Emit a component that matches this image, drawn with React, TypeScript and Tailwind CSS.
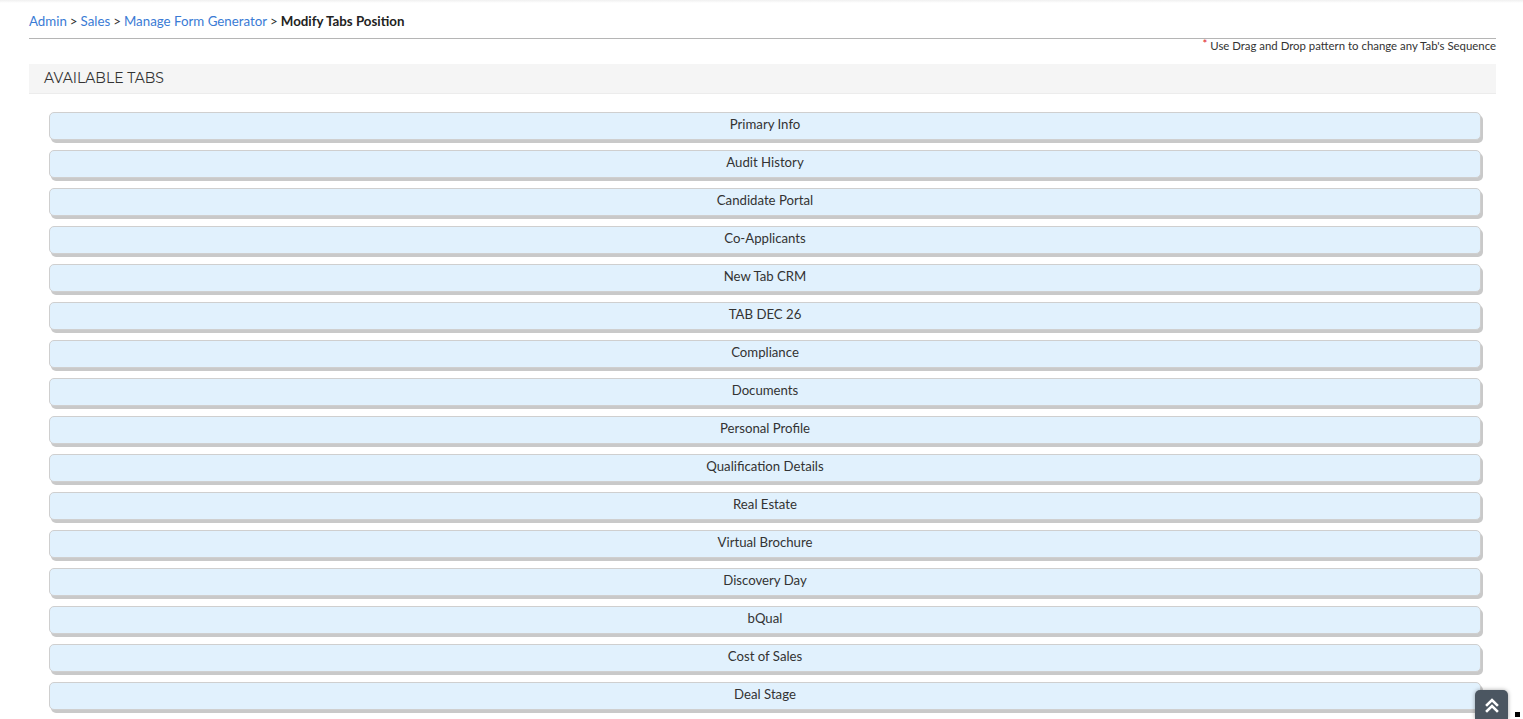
import React from "react";

const tabs = [
  "Primary Info",
  "Audit History",
  "Candidate Portal",
  "Co-Applicants",
  "New Tab CRM",
  "TAB DEC 26",
  "Compliance",
  "Documents",
  "Personal Profile",
  "Qualification Details",
  "Real Estate",
  "Virtual Brochure",
  "Discovery Day",
  "bQual",
  "Cost of Sales",
  "Deal Stage",
];

const App = () => {
  return (
    <div
      className="relative h-[719px] w-full overflow-hidden bg-white text-[#333]"
      style={{ fontFamily: "'Source Sans Pro', Lato, 'Noto Sans', sans-serif" }}
    >
      <div className="h-[3px] w-full bg-gradient-to-b from-[#f0f0f0] to-white" />
      <div className="ml-[29px] mr-[27px]">
        <div className="flex h-[36px] items-center border-b border-[#b5b5b5] pt-[2px] text-[13.3px]">
          <a className="text-[#3a7bd5]">Admin</a>
          <span className="mx-[3px] text-[#333]">&gt;</span>
          <a className="text-[#3a7bd5]">Sales</a>
          <span className="mx-[3px] text-[#333]">&gt;</span>
          <a className="text-[#3a7bd5]">Manage Form Generator</a>
          <span className="mx-[3px] text-[#333]">&gt;</span>
          <span className="font-bold text-[#222]">Modify Tabs Position</span>
        </div>
        <div className="flex h-[25px] items-start justify-end text-[11.4px] leading-[14px] text-[#333]">
          <span className="mr-[3px] -mt-[2px] text-[#e0191f]">*</span>
          <span>Use Drag and Drop pattern to change any Tab's Sequence</span>
        </div>
        <div
          className="flex h-[30px] items-center border-b border-[#ececec] bg-[#f5f5f5] pl-[15px] text-[14px] text-[#333]"
          style={{ fontFamily: "Montserrat, 'Open Sans', sans-serif" }}
        >
          AVAILABLE TABS
        </div>
        <div className="ml-[20px] mr-[15px] mt-[18px] flex flex-col gap-[10px]">
          {tabs.map((t) => (
            <div
              key={t}
              className="flex h-[28px] items-center justify-center rounded-[5px] border border-[#cfcfcf] bg-[#e1f1fd] pb-[2px] text-[13.2px] text-[#333] shadow-[2px_3px_0_#c9c9c9]"
            >
              {t}
            </div>
          ))}
        </div>
      </div>
      <button className="absolute bottom-0 left-[1475px] flex h-[29px] w-[33px] items-center justify-center rounded-t-[5px] bg-[#4b5661] shadow-[0_0_4px_rgba(0,0,0,0.35)]">
        <svg width="14" height="16" viewBox="0 0 14 16" fill="none">
          <path d="M2 8 L7 3 L12 8" stroke="white" strokeWidth="2.6" strokeLinecap="square" />
          <path d="M2 14 L7 9 L12 14" stroke="white" strokeWidth="2.6" strokeLinecap="square" />
        </svg>
      </button>
      <div className="absolute bottom-[2px] left-[1515px] h-[5px] w-[5px] bg-black" />
    </div>
  );
};

export default App;
